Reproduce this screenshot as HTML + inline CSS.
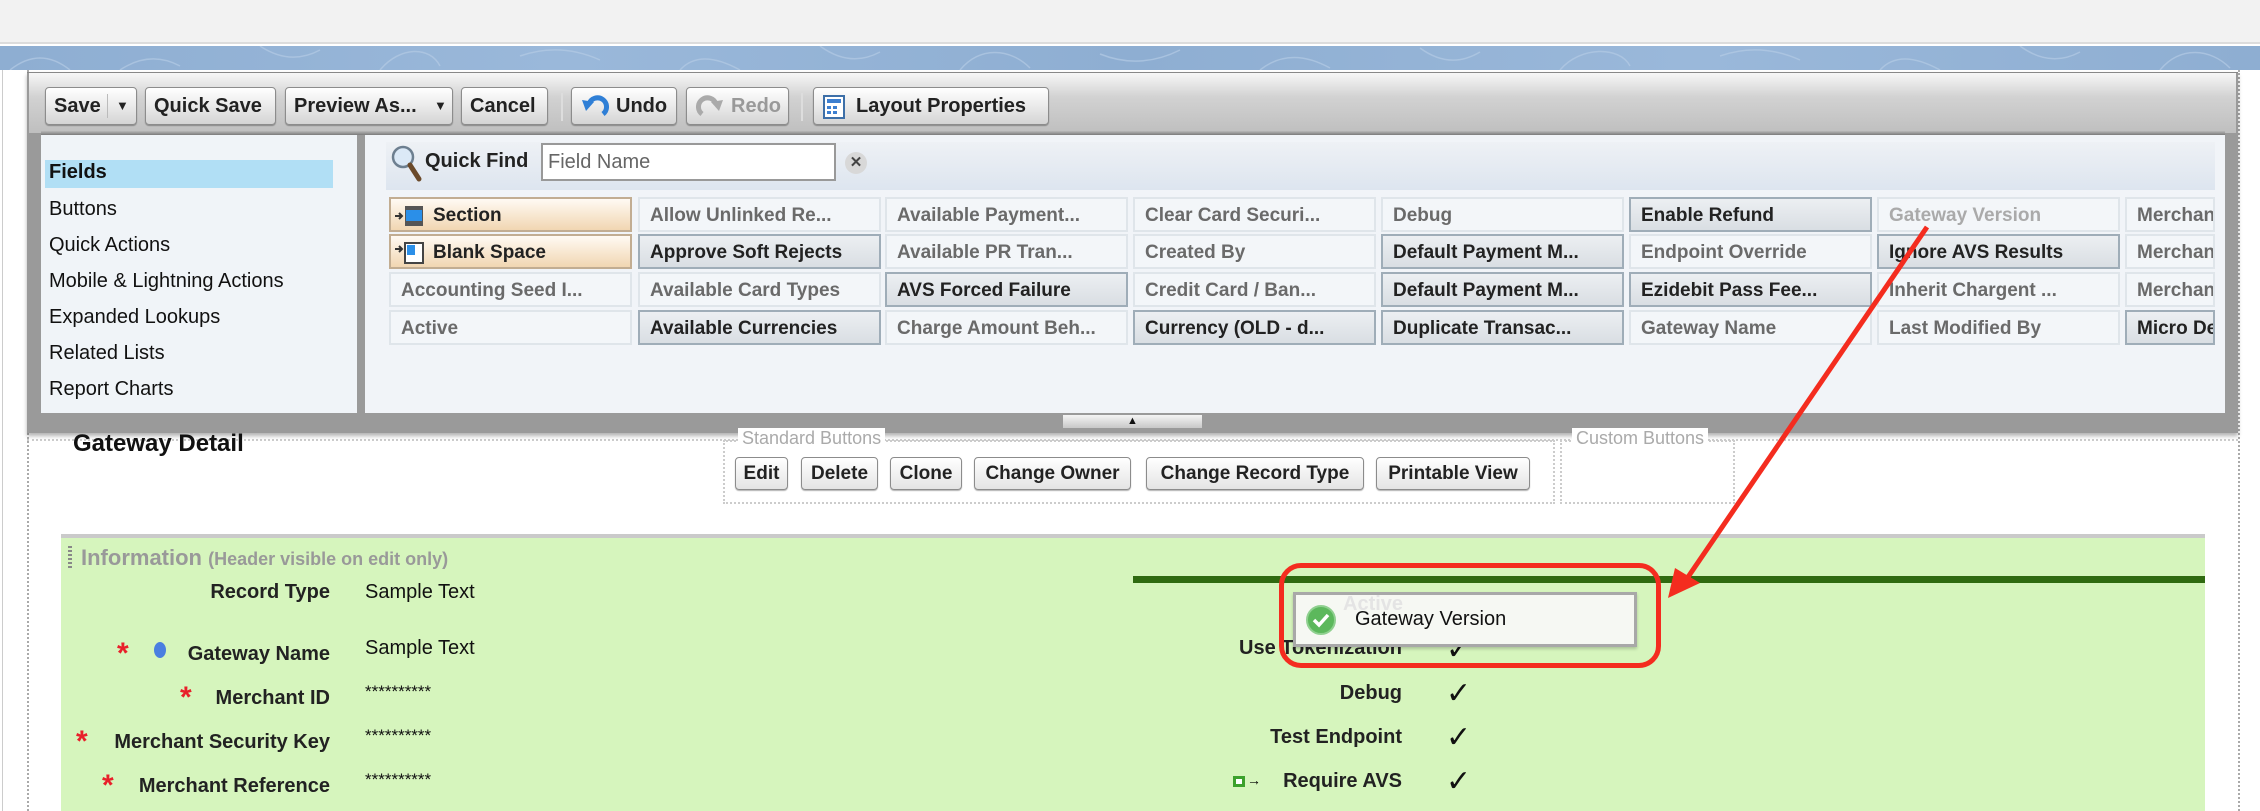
<!DOCTYPE html>
<html><head><meta charset="utf-8"><style>
*{margin:0;padding:0;box-sizing:border-box}
body{width:2260px;height:811px;overflow:hidden;background:#fff;font-family:"Liberation Sans",Arial,sans-serif;position:relative}
.a{position:absolute}
.btn{position:absolute;top:87px;height:38px;border:1px solid #8c8c8c;border-radius:4px;background:linear-gradient(#ffffff,#e6e6e6 60%,#d4d4d4);font-weight:bold;font-size:20px;color:#222;line-height:36px;padding-left:8px;white-space:nowrap;box-shadow:0 1px 1px rgba(0,0,0,.3)}
.side div{position:absolute;left:49px;font-size:20px;color:#111;white-space:nowrap}
.cell{position:absolute;width:243px;height:35px;font-size:19px;font-weight:bold;line-height:33px;padding-left:10px;white-space:nowrap;overflow:hidden;border:2px solid #dfe5ea;background:#f3f6f9;color:#6a6a6a}
.u{border-color:#9fadb8;background:linear-gradient(#eceff2,#d9dee3);color:#222}
.o{border-color:#c2ad92;background:linear-gradient(#fffaf3,#f1d6b2);color:#222}
.l{color:#aaa}
.sb{position:absolute;top:457px;height:33px;border:1px solid #8c8c8c;border-radius:4px;background:linear-gradient(#fff,#e4e4e4);font-weight:bold;font-size:19px;line-height:31px;text-align:center;color:#222;box-shadow:0 1px 1px rgba(0,0,0,.3)}
.lab{position:absolute;font-size:20px;font-weight:bold;color:#222;text-align:right;white-space:nowrap}
.val{position:absolute;font-size:20px;color:#111;white-space:nowrap}
.star{position:absolute;color:#e8202a;font-size:30px;font-weight:bold}
.ck{position:absolute;left:1446px;font-size:30px;color:#111}
</style></head><body>
<div class="a" style="left:0;top:0;width:2260px;height:44px;background:#f2f2f2;border-bottom:2px solid #dcdcdc"></div>
<div class="a" style="left:0;top:46px;width:2260px;height:24px;background:linear-gradient(90deg,#8eaed2,#9ab8da,#8eaed2,#9ab8da,#8eaed2)"></div>
<svg class="a" style="left:0;top:46px" width="2260" height="24"><g fill="none" stroke="#b4cbe4" stroke-width="1.5" opacity=".7"><path d="M10 24 Q40 0 70 24 M120 24 Q150 4 180 20 M260 0 Q290 20 320 4 M380 24 C400 0 430 0 440 20 M520 10 Q560 -4 600 14 M680 24 Q700 2 740 24 M820 0 Q850 22 880 6 M960 24 C980 0 1010 2 1030 22 M1100 8 Q1140 24 1180 4 M1260 24 Q1290 0 1330 22 M1420 2 Q1450 24 1480 6 M1560 24 C1580 0 1620 0 1630 20 M1720 10 Q1760 -4 1800 14 M1880 24 Q1900 2 1940 24 M2020 0 Q2050 22 2080 6 M2160 24 C2180 0 2210 2 2230 22"/></g></svg>
<div class="a" style="left:2px;top:70px;width:1px;height:741px;background:#ccc"></div>
<div class="a" style="left:27px;top:70px;height:741px;border-left:2px dotted #aaa"></div>
<div class="a" style="left:2238px;top:70px;height:741px;border-left:2px dotted #aaa"></div>
<div class="a" style="left:27px;top:439px;width:2211px;border-top:2px dotted #ccc"></div>
<div class="a" style="left:27px;top:72px;width:2211px;height:361px;background:#9a9a9a;border-top:1px solid #888;box-shadow:0 3px 4px rgba(0,0,0,.3)"></div>
<div class="a" style="left:29px;top:73px;width:2207px;height:60px;background:linear-gradient(#f7f7f7,#d2d2d2 40%,#bfbfbf)"></div>
<div class="a" style="left:41px;top:130px;width:2184px;height:5px;background:linear-gradient(#c8c8c8,#7a7a7a)"></div>
<div class="btn" style="left:45px;width:92px">Save<span style="position:absolute;left:61px;top:6px;height:24px;border-left:1px solid #bbb"></span><span style="position:absolute;left:70px;font-size:13px">▼</span></div>
<div class="btn" style="left:145px;width:131px">Quick Save</div>
<div class="btn" style="left:285px;width:168px">Preview As...<span style="position:absolute;left:148px;font-size:13px">▼</span></div>
<div class="btn" style="left:461px;width:87px">Cancel</div>
<div class="a" style="left:561px;top:93px;height:28px;border-left:2px solid #ddd"></div>
<div class="btn" style="left:571px;width:106px;padding-left:44px"><svg class="a" style="left:9px;top:6px" width="28" height="26"><path d="M22 20 A9 9 0 1 0 8 10" fill="none" stroke="#2f7fd6" stroke-width="5"/><path d="M1 6 L13 8 L5 17Z" fill="#2f7fd6"/></svg>Undo</div>
<div class="btn" style="left:686px;width:103px;padding-left:44px;color:#999"><svg class="a" style="left:9px;top:6px" width="28" height="26"><path d="M6 20 A9 9 0 1 1 20 10" fill="none" stroke="#aaa" stroke-width="5"/><path d="M27 6 L15 8 L23 17Z" fill="#aaa"/></svg>Redo</div>
<div class="a" style="left:801px;top:93px;height:28px;border-left:2px solid #ddd"></div>
<div class="btn" style="left:813px;width:236px;padding-left:42px"><svg class="a" style="left:9px;top:7px" width="22" height="24"><rect x="1" y="1" width="20" height="22" fill="#fff" stroke="#3d6fa8" stroke-width="2"/><rect x="4" y="4" width="14" height="4" fill="#3d7fd0"/><rect x="4" y="11" width="4" height="3" fill="#3d7fd0"/><rect x="10" y="11" width="4" height="3" fill="#3d7fd0"/><rect x="4" y="16" width="4" height="3" fill="#3d7fd0"/><rect x="10" y="16" width="4" height="3" fill="#3d7fd0"/></svg>Layout Properties</div>
<div class="a side" style="left:41px;top:135px;width:316px;height:278px;background:#f0f4f8"></div>
<div class="a" style="left:45px;top:160px;width:288px;height:28px;background:#b1dff5"></div>
<div class="side">
<div style="top:161px;font-weight:bold">Fields</div>
<div style="top:198px">Buttons</div>
<div style="top:234px">Quick Actions</div>
<div style="top:270px">Mobile &amp; Lightning Actions</div>
<div style="top:306px">Expanded Lookups</div>
<div style="top:342px">Related Lists</div>
<div style="top:378px">Report Charts</div>
</div>
<div class="a" style="left:365px;top:135px;width:1860px;height:278px;background:#f1f4f8"></div>
<div class="a" style="left:386px;top:142px;width:1829px;height:48px;background:linear-gradient(#eef1f5,#dde5ef)"></div>
<svg class="a" style="left:390px;top:144px" width="34" height="40"><circle cx="13" cy="13" r="10" fill="#dbe9f7" stroke="#6d7f90" stroke-width="2.5"/><path d="M20 21 L29 35" stroke="#6b4a2a" stroke-width="5" stroke-linecap="round"/></svg>
<div class="a" style="left:425px;top:150px;font-size:20px;font-weight:bold;color:#222">Quick Find</div>
<div class="a" style="left:541px;top:143px;width:295px;height:38px;background:#fff;border:2px solid #999;font-size:20px;color:#666;line-height:34px;padding-left:5px">Field Name</div>
<div class="a" style="left:845px;top:152px;width:22px;height:22px;border-radius:50%;background:#d8d8d8;color:#444;font-size:15px;font-weight:bold;text-align:center;line-height:22px">✕</div>
<div class="cell o" style="left:389px;top:197px;padding-left:42px"><svg class="a" style="left:3px;top:5px" width="36" height="24"><path d="M1 12h7M5 9l3 3-3 3" stroke="#333" stroke-width="2" fill="none"/><rect x="11" y="2" width="18" height="20" fill="#555"/><rect x="12" y="6" width="16" height="11" fill="#2b8fe8"/></svg>Section</div>
<div class="cell" style="left:638px;top:197px">Allow Unlinked Re...</div>
<div class="cell" style="left:885px;top:197px">Available Payment...</div>
<div class="cell" style="left:1133px;top:197px">Clear Card Securi...</div>
<div class="cell" style="left:1381px;top:197px">Debug</div>
<div class="cell u" style="left:1629px;top:197px">Enable Refund</div>
<div class="cell l" style="left:1877px;top:197px">Gateway Version</div>
<div class="cell" style="left:2125px;top:197px;width:90px">Merchan</div>
<div class="cell o" style="left:389px;top:234px;padding-left:42px"><svg class="a" style="left:3px;top:5px" width="36" height="24"><path d="M1 8h7M5 5l3 3-3 3" stroke="#333" stroke-width="2" fill="none"/><rect x="11" y="2" width="18" height="20" fill="#fff" stroke="#444" stroke-width="2"/><rect x="13" y="4" width="8" height="10" fill="#2b8fe8"/></svg>Blank Space</div>
<div class="cell u" style="left:638px;top:234px">Approve Soft Rejects</div>
<div class="cell" style="left:885px;top:234px">Available PR Tran...</div>
<div class="cell" style="left:1133px;top:234px">Created By</div>
<div class="cell u" style="left:1381px;top:234px">Default Payment M...</div>
<div class="cell" style="left:1629px;top:234px">Endpoint Override</div>
<div class="cell u" style="left:1877px;top:234px">Ignore AVS Results</div>
<div class="cell" style="left:2125px;top:234px;width:90px">Merchan</div>
<div class="cell" style="left:389px;top:272px">Accounting Seed I...</div>
<div class="cell" style="left:638px;top:272px">Available Card Types</div>
<div class="cell u" style="left:885px;top:272px">AVS Forced Failure</div>
<div class="cell" style="left:1133px;top:272px">Credit Card / Ban...</div>
<div class="cell u" style="left:1381px;top:272px">Default Payment M...</div>
<div class="cell u" style="left:1629px;top:272px">Ezidebit Pass Fee...</div>
<div class="cell" style="left:1877px;top:272px">Inherit Chargent ...</div>
<div class="cell" style="left:2125px;top:272px;width:90px">Merchan</div>
<div class="cell" style="left:389px;top:310px">Active</div>
<div class="cell u" style="left:638px;top:310px">Available Currencies</div>
<div class="cell" style="left:885px;top:310px">Charge Amount Beh...</div>
<div class="cell u" style="left:1133px;top:310px">Currency (OLD - d...</div>
<div class="cell u" style="left:1381px;top:310px">Duplicate Transac...</div>
<div class="cell" style="left:1629px;top:310px">Gateway Name</div>
<div class="cell" style="left:1877px;top:310px">Last Modified By</div>
<div class="cell u" style="left:2125px;top:310px;width:90px">Micro De</div>
<div class="a" style="left:1063px;top:415px;width:139px;height:13px;background:linear-gradient(#f4f4f4,#c8c8c8);font-size:11px;text-align:center;line-height:13px;color:#111">▲</div>
<div class="a" style="left:73px;top:430px;font-size:24px;font-weight:bold;color:#111">Gateway Detail</div>
<div class="a" style="left:723px;top:440px;width:832px;height:64px;border:2px dotted #ccc"></div>
<div class="a" style="left:738px;top:428px;font-size:18px;color:#aaa;background:#fff;padding:0 4px">Standard Buttons</div>
<div class="a" style="left:1560px;top:440px;width:175px;height:64px;border:2px dotted #ccc"></div>
<div class="a" style="left:1572px;top:428px;font-size:18px;color:#aaa;background:#fff;padding:0 4px">Custom Buttons</div>
<div class="sb" style="left:735px;width:53px">Edit</div>
<div class="sb" style="left:801px;width:77px">Delete</div>
<div class="sb" style="left:890px;width:72px">Clone</div>
<div class="sb" style="left:974px;width:157px">Change Owner</div>
<div class="sb" style="left:1146px;width:218px">Change Record Type</div>
<div class="sb" style="left:1376px;width:154px">Printable View</div>
<div class="a" style="left:61px;top:534px;width:2144px;height:277px;background:#d6f5bd;border-top:4px solid #cacaca"></div>
<div class="a" style="left:68px;top:546px;width:4px;height:22px;border-left:2px dotted #888;border-right:2px dotted #888"></div>
<div class="a" style="left:81px;top:545px;font-size:22px;font-weight:bold;color:#999">Information <span style="font-size:18px">(Header visible on edit only)</span></div>
<div class="lab" style="right:1930px;top:581px">Record Type</div>
<div class="val" style="left:365px;top:581px">Sample Text</div>
<div class="star" style="left:117px;top:637px">*</div>
<div class="a" style="left:154px;top:642px;width:12px;height:16px;border-radius:50%;background:#4a7fe0"></div>
<div class="lab" style="right:1930px;top:643px">Gateway Name</div>
<div class="val" style="left:365px;top:637px">Sample Text</div>
<div class="star" style="left:180px;top:681px">*</div>
<div class="lab" style="right:1930px;top:687px">Merchant ID</div>
<div class="val" style="left:365px;top:682px;font-size:17px">**********</div>
<div class="star" style="left:76px;top:725px">*</div>
<div class="lab" style="right:1930px;top:731px">Merchant Security Key</div>
<div class="val" style="left:365px;top:726px;font-size:17px">**********</div>
<div class="star" style="left:102px;top:769px">*</div>
<div class="lab" style="right:1930px;top:775px">Merchant Reference</div>
<div class="val" style="left:365px;top:770px;font-size:17px">**********</div>
<div class="a" style="left:1133px;top:576px;width:1072px;height:7px;background:#2f6a10"></div>
<div class="lab" style="right:858px;top:637px">Use Tokenization</div>
<div class="ck" style="top:632px">✓</div>
<div class="lab" style="right:858px;top:682px">Debug</div>
<div class="ck" style="top:676px">✓</div>
<div class="lab" style="right:858px;top:726px">Test Endpoint</div>
<div class="ck" style="top:720px">✓</div>
<div class="a" style="left:1233px;top:776px;width:12px;height:11px;border:3px solid #3ca12c;background:#fff"></div>
<div class="a" style="left:1247px;top:772px;font-size:14px;font-weight:bold">→</div>
<div class="lab" style="right:858px;top:770px">Require AVS</div>
<div class="ck" style="top:764px">✓</div>
<div class="a" style="left:1293px;top:592px;width:344px;height:55px;background:#f6f8f3;border:3px solid #a8a8a8;box-shadow:0 2px 3px rgba(0,0,0,.2)"></div>
<div class="a" style="left:1343px;top:593px;font-size:20px;font-weight:bold;color:#e4e4e4">Active</div>
<svg class="a" style="left:1305px;top:604px" width="32" height="32"><circle cx="16" cy="16" r="14" fill="#5cb85c" stroke="#8fd08f" stroke-width="2"/><path d="M9 16 L14 21 L23 11" stroke="#fff" stroke-width="3.5" fill="none"/></svg>
<div class="a" style="left:1355px;top:608px;font-size:20px;color:#111">Gateway Version</div>
<div class="a" style="left:1279px;top:563px;width:382px;height:105px;border:5px solid #f42c1f;border-radius:22px"></div>
<svg class="a" style="left:0;top:0" width="2260" height="811"><path d="M1927 227 L1686 580" stroke="#f42c1f" stroke-width="5"/><path d="M1668 598 L1700 583 L1675 568Z" fill="#f42c1f"/></svg>
</body></html>
